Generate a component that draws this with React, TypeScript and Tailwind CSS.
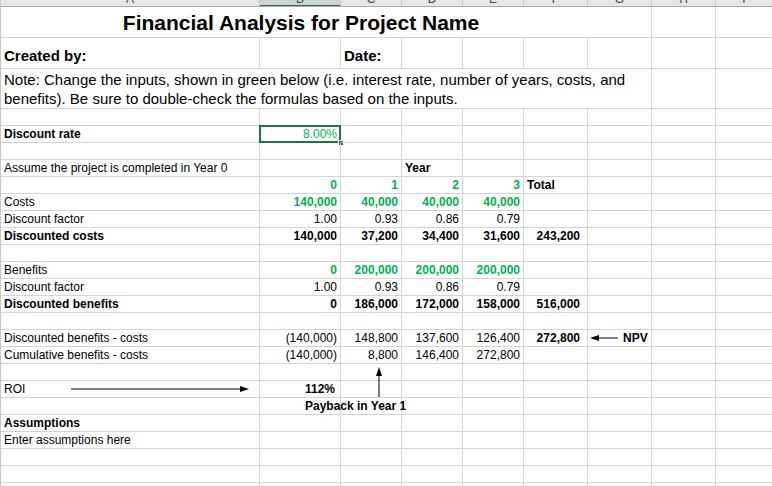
import React from 'react';

const widths = [259, 81, 61, 61, 61, 64, 64, 64, 57];
const letters = ['A', 'B', 'C', 'D', 'E', 'F', 'G', 'H', 'I'];

type Cell = { t?: string; c?: string };

// one entry per spreadsheet row: height + cells by column index
const rows: { h: number; cells: Record<number, Cell> }[] = [
  { h: 17, cells: {} },
  { h: 17, cells: { 0: { t: 'Discount rate', c: 'font-bold' }, 1: { t: '8.00%', c: 'text-right text-[#00b050] sel' } } },
  { h: 17, cells: {} },
  { h: 17, cells: { 0: { t: 'Assume the project is completed in Year 0' }, 3: { t: 'Year', c: 'font-bold' } } },
  { h: 17, cells: { 1: { t: '0', c: 'text-right font-bold text-[#00b050]' }, 2: { t: '1', c: 'text-right font-bold text-[#00b050]' }, 3: { t: '2', c: 'text-right font-bold text-[#00b050]' }, 4: { t: '3', c: 'text-right font-bold text-[#00b050]' }, 5: { t: 'Total', c: 'font-bold' } } },
  { h: 17, cells: { 0: { t: 'Costs' }, 1: { t: '140,000', c: 'text-right font-bold text-[#00b050]' }, 2: { t: '40,000', c: 'text-right font-bold text-[#00b050]' }, 3: { t: '40,000', c: 'text-right font-bold text-[#00b050]' }, 4: { t: '40,000', c: 'text-right font-bold text-[#00b050]' } } },
  { h: 17, cells: { 0: { t: 'Discount factor' }, 1: { t: '1.00', c: 'text-right' }, 2: { t: '0.93', c: 'text-right' }, 3: { t: '0.86', c: 'text-right' }, 4: { t: '0.79', c: 'text-right' } } },
  { h: 17, cells: { 0: { t: 'Discounted costs', c: 'font-bold' }, 1: { t: '140,000', c: 'text-right font-bold' }, 2: { t: '37,200', c: 'text-right font-bold' }, 3: { t: '34,400', c: 'text-right font-bold' }, 4: { t: '31,600', c: 'text-right font-bold' }, 5: { t: '243,200', c: 'text-right font-bold pr-[7px]' } } },
  { h: 17, cells: {} },
  { h: 17, cells: { 0: { t: 'Benefits' }, 1: { t: '0', c: 'text-right font-bold text-[#00b050]' }, 2: { t: '200,000', c: 'text-right font-bold text-[#00b050]' }, 3: { t: '200,000', c: 'text-right font-bold text-[#00b050]' }, 4: { t: '200,000', c: 'text-right font-bold text-[#00b050]' } } },
  { h: 17, cells: { 0: { t: 'Discount factor' }, 1: { t: '1.00', c: 'text-right' }, 2: { t: '0.93', c: 'text-right' }, 3: { t: '0.86', c: 'text-right' }, 4: { t: '0.79', c: 'text-right' } } },
  { h: 17, cells: { 0: { t: 'Discounted benefits', c: 'font-bold' }, 1: { t: '0', c: 'text-right font-bold' }, 2: { t: '186,000', c: 'text-right font-bold' }, 3: { t: '172,000', c: 'text-right font-bold' }, 4: { t: '158,000', c: 'text-right font-bold' }, 5: { t: '516,000', c: 'text-right font-bold pr-[7px]' } } },
  { h: 17, cells: {} },
  { h: 17, cells: { 0: { t: 'Discounted benefits - costs' }, 1: { t: '(140,000)', c: 'text-right' }, 2: { t: '148,800', c: 'text-right' }, 3: { t: '137,600', c: 'text-right' }, 4: { t: '126,400', c: 'text-right' }, 5: { t: '272,800', c: 'text-right font-bold pr-[7px]' }, 6: { t: 'NPV', c: 'font-bold pl-[35px]' } } },
  { h: 17, cells: { 0: { t: 'Cumulative benefits - costs' }, 1: { t: '(140,000)', c: 'text-right' }, 2: { t: '8,800', c: 'text-right' }, 3: { t: '146,400', c: 'text-right' }, 4: { t: '272,800', c: 'text-right' } } },
  { h: 17, cells: {} },
  { h: 17, cells: { 0: { t: 'ROI' }, 1: { t: '112%', c: 'font-bold pl-[45px]' } } },
  { h: 17, cells: { 1: { t: 'Payback in Year 1', c: 'font-bold pl-[45px]' } } },
  { h: 17, cells: { 0: { t: 'Assumptions', c: 'font-bold' } } },
  { h: 17, cells: { 0: { t: 'Enter assumptions here' } } },
  { h: 17, cells: {} },
  { h: 17, cells: {} },
  { h: 17, cells: {} },
];

function GridRow({ h, cells }: { h: number; cells: Record<number, Cell> }) {
  return (
    <div className="flex" style={{ height: h }}>
      {widths.map((w, i) => {
        const cell = cells[i];
        const sel = cell?.c?.includes('sel');
        return (
          <div
            key={i}
            className={`relative shrink-0 border-r border-b border-[#d4d4d4] px-[3px] leading-[16px] whitespace-nowrap overflow-visible ${cell?.c ?? ''}`}
            style={{ width: w }}
          >
            {cell?.t && <span className="relative z-10">{cell.t}</span>}
            {sel && (
              <>
                <div className="absolute -left-px -top-px -right-px -bottom-px border-2 border-[#217346]" />
                <div className="absolute -right-[4px] -bottom-[4px] w-[6px] h-[6px] bg-[#217346] border border-white" />
              </>
            )}
          </div>
        );
      })}
    </div>
  );
}

export default function App() {
  return (
    <div className="relative w-[772px] h-[486px] overflow-hidden bg-white text-[12px] text-black border-l border-[#c6c6c6]" style={{ fontFamily: '"Liberation Sans", Arial, sans-serif' }}>
      {/* column headers, mostly scrolled off */}
      <div className="flex h-[7px] overflow-hidden bg-[#e6e6e6] border-b border-[#ababab]">
        {widths.map((w, i) => (
          <div key={i} className={`shrink-0 border-r border-[#c8c8c8] text-center text-[#444] leading-[14px] -mt-[8px] ${i === 1 ? 'bg-[#d2d2d2] border-b-2 border-b-[#217346]' : ''}`} style={{ width: w, height: 15 }}>
            {letters[i]}
          </div>
        ))}
      </div>

      {/* title */}
      <div className="flex h-[31px]">
        <div className="w-[651px] shrink-0 border-r border-b border-[#d4d4d4] text-center font-bold text-[21px] leading-[31px] pr-[50px]">
          Financial Analysis for Project Name
        </div>
        <div className="w-[64px] shrink-0 border-r border-b border-[#d4d4d4]" />
        <div className="w-[57px] shrink-0 border-r border-b border-[#d4d4d4]" />
      </div>

      {/* created / date */}
      <div className="flex h-[31px] text-[15px] font-bold">
        {widths.map((w, i) => (
          <div key={i} className="shrink-0 border-r border-b border-[#d4d4d4] px-[3px] pt-[8px] leading-[20px] whitespace-nowrap" style={{ width: w }}>
            {i === 0 ? 'Created by:' : i === 2 ? 'Date:' : ''}
          </div>
        ))}
      </div>

      {/* note */}
      <div className="flex h-[40px]">
        <div className="w-[651px] shrink-0 border-r border-b border-[#d4d4d4] px-[3px] text-[15px] leading-[19px] pt-px">
          Note: Change the inputs, shown in green below (i.e. interest rate, number of years, costs, and benefits). Be sure to double-check the formulas based on the inputs.
        </div>
        <div className="w-[64px] shrink-0 border-r border-b border-[#d4d4d4]" />
        <div className="w-[57px] shrink-0 border-r border-b border-[#d4d4d4]" />
      </div>

      {rows.map((r, i) => (
        <GridRow key={i} h={r.h} cells={r.cells} />
      ))}

      {/* annotation arrows */}
      <svg className="absolute left-0 top-0 pointer-events-none" width="772" height="486">
        <line x1="70" y1="389" x2="240" y2="389" stroke="black" strokeWidth="1" />
        <polygon points="248,389 239,386 239,392" fill="black" />
        <line x1="597" y1="338" x2="617" y2="338" stroke="black" strokeWidth="1" />
        <polygon points="589,338 598,335 598,341" fill="black" />
        <line x1="378" y1="375" x2="378" y2="397" stroke="black" strokeWidth="1" />
        <polygon points="378,367 375,376 381,376" fill="black" />
      </svg>
    </div>
  );
}
